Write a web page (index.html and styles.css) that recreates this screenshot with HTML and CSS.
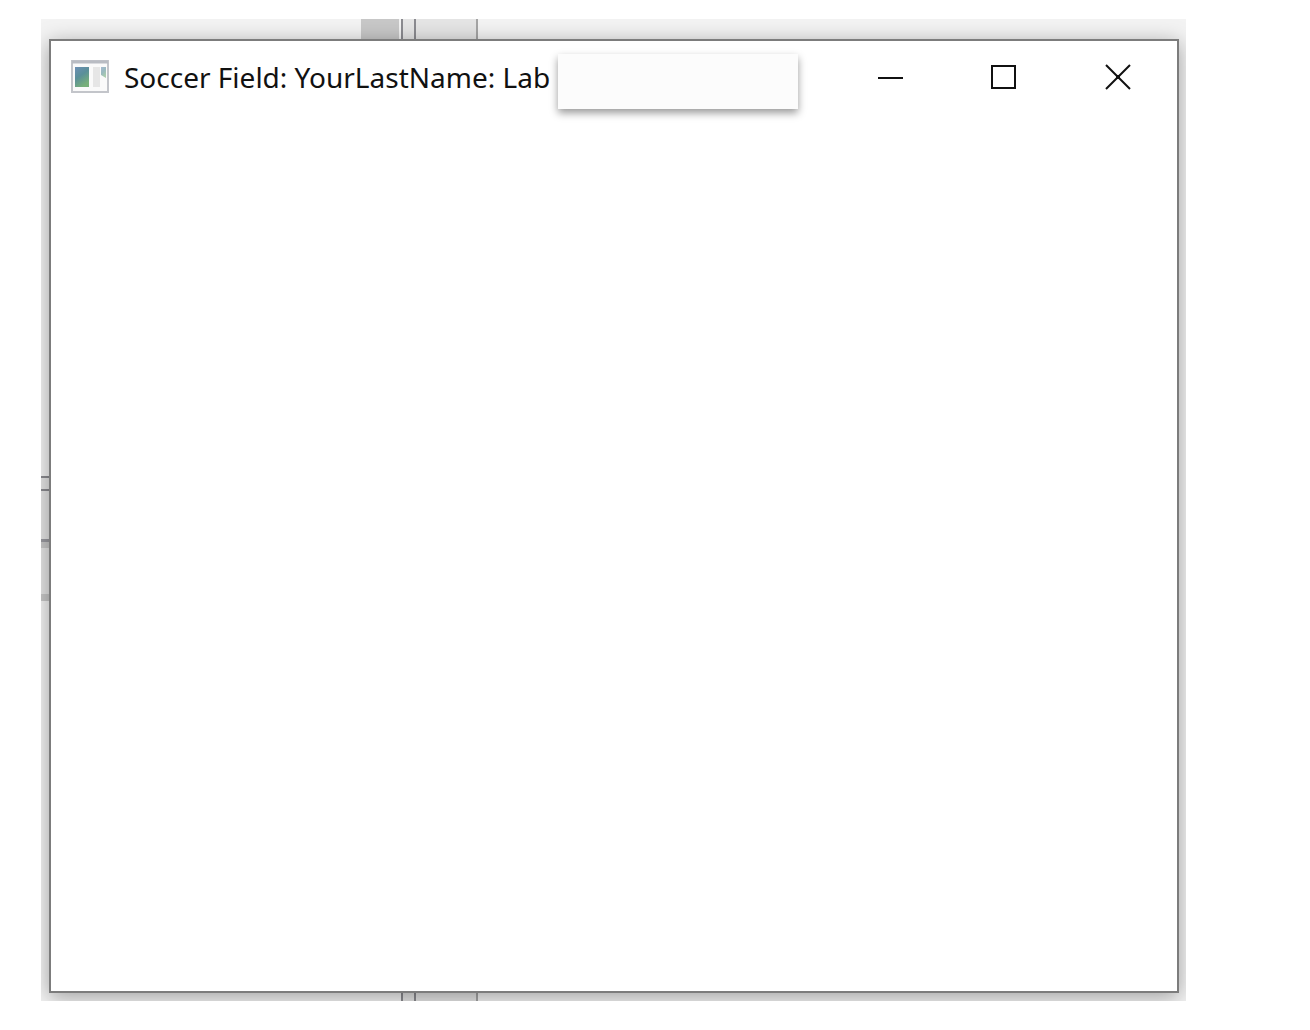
FILE: index.html
```html
<!DOCTYPE html>
<html lang="en">
  <head>
    <meta charset="UTF-8" />
    <meta name="viewport" content="width=device-width, initial-scale=1" />
    <title>Soccer Field</title>
    <link rel="stylesheet" href="styles.css">
  </head>
  <body>
    <div class="desktop">
      <main class="window">
        <header class="title-bar">
          <svg class="app-icon" width="40" height="36" viewBox="0 0 40 36" aria-hidden="true">
            <defs>
              <linearGradient id="pane" x1="0" y1="0" x2="0.5" y2="1">
                <stop offset="0" stop-color="#6d8fb5" />
                <stop offset="0.5" stop-color="#5a8f99" />
                <stop offset="1" stop-color="#77b07a" />
              </linearGradient>
            </defs>
            <rect x="2" y="2" width="36" height="31" fill="#fafafa" stroke="#c3c5ca" stroke-width="2" />
            <path d="M2 3h36" stroke="#b9bcc3" stroke-width="3" />
            <rect x="5" y="8" width="14" height="20" fill="url(#pane)" />
            <rect x="23" y="8" width="7" height="20" fill="#e6e6e6" />
            <path d="M31 8h5v11l-5-3z" fill="url(#pane)" opacity="0.6" />
          </svg>
          <h1 class="title">Soccer Field: YourLastName: Lab</h1>
          <div class="cover"></div>
          <div class="controls">
            <button class="control" type="button" aria-label="Minimize">
              <svg width="28" height="28" viewBox="0 0 28 28"><path d="M2 15h25" /></svg>
            </button>
            <button class="control" type="button" aria-label="Maximize">
              <svg width="28" height="28" viewBox="0 0 28 28"><path d="M2 3h23v22H2z" /></svg>
            </button>
            <button class="control" type="button" aria-label="Close">
              <svg width="28" height="28" viewBox="0 0 28 28"><path d="M2 2l24 24M26 2L2 26" /><path d="M12 14h4" stroke-width="4" /></svg>
            </button>
          </div>
        </header>
      </main>
    </div>
  </body>
</html>
```
FILE: styles.css
```css
:root {
  --desktop: #f3f3f3;
  --panel: #e5e5e5;
  --line: #8b8b90;
  --frame: #7c7c7c;
  --text: #111;
}
* {
  box-sizing: border-box;
  margin: 0;
  padding: 0;
}
body {
  display: flex;
  min-height: 100vh;
  padding: 19px 124px 29px 41px;
  background: #fff;
  color: var(--text);
  font-family: 'Segoe UI', 'Noto Sans', 'Open Sans', sans-serif;
}
/* what shows of the windows behind: column edges on top and bottom, row edges on the left */
.desktop {
  display: flex;
  flex: 1;
  padding: 20px 7px 8px 8px;
  overflow: hidden;
  background:
    linear-gradient(#c8c8c8, #c8c8c8) 320px 0 / 38px 21px no-repeat,
    linear-gradient(
      to right,
      transparent 360px,
      var(--line) 360px 362px,
      var(--panel) 362px 373px,
      var(--line) 373px 375px,
      var(--panel) 375px 435px,
      #a5a5a5 435px 437px,
      transparent 437px
    ),
    linear-gradient(
        transparent 457px,
        var(--line) 457px 459px,
        var(--panel) 459px 470px,
        var(--line) 470px 472px,
        var(--panel) 472px 520px,
        #9a9aa0 520px 523px,
        #c8c8c8 523px 529px,
        var(--panel) 529px 575px,
        #c8c8c8 575px 582px,
        transparent 582px
      )
      0 0 / 10px 100% no-repeat,
    var(--desktop);
}
.window {
  flex: 1;
  background: #fff;
  border: 2px solid var(--frame);
  box-shadow: 0 4px 20px rgba(0, 0, 0, 0.35);
}
.title-bar {
  display: flex;
  align-items: center;
  height: 72px;
  padding: 0 2px 0 19px;
}
.app-icon {
  flex: none;
}
.title {
  flex: none;
  padding-left: 14px;
  font-size: 28px;
  font-weight: 400;
  line-height: 36px;
  white-space: nowrap;
}
.cover {
  align-self: flex-end;
  width: 240px;
  height: 55px;
  margin: 0 0 4px 8px;
  background: #fcfcfc;
  box-shadow: 0 4px 8px rgba(0, 0, 0, 0.4);
}
.controls {
  display: flex;
  margin-left: auto;
}
.control {
  display: flex;
  align-items: center;
  justify-content: center;
  width: 114px;
  height: 72px;
  background: transparent;
  border: none;
}
.control:hover {
  background: #e5e5e5;
}
.control svg {
  fill: none;
  stroke: #111;
  stroke-width: 2;
}
```
